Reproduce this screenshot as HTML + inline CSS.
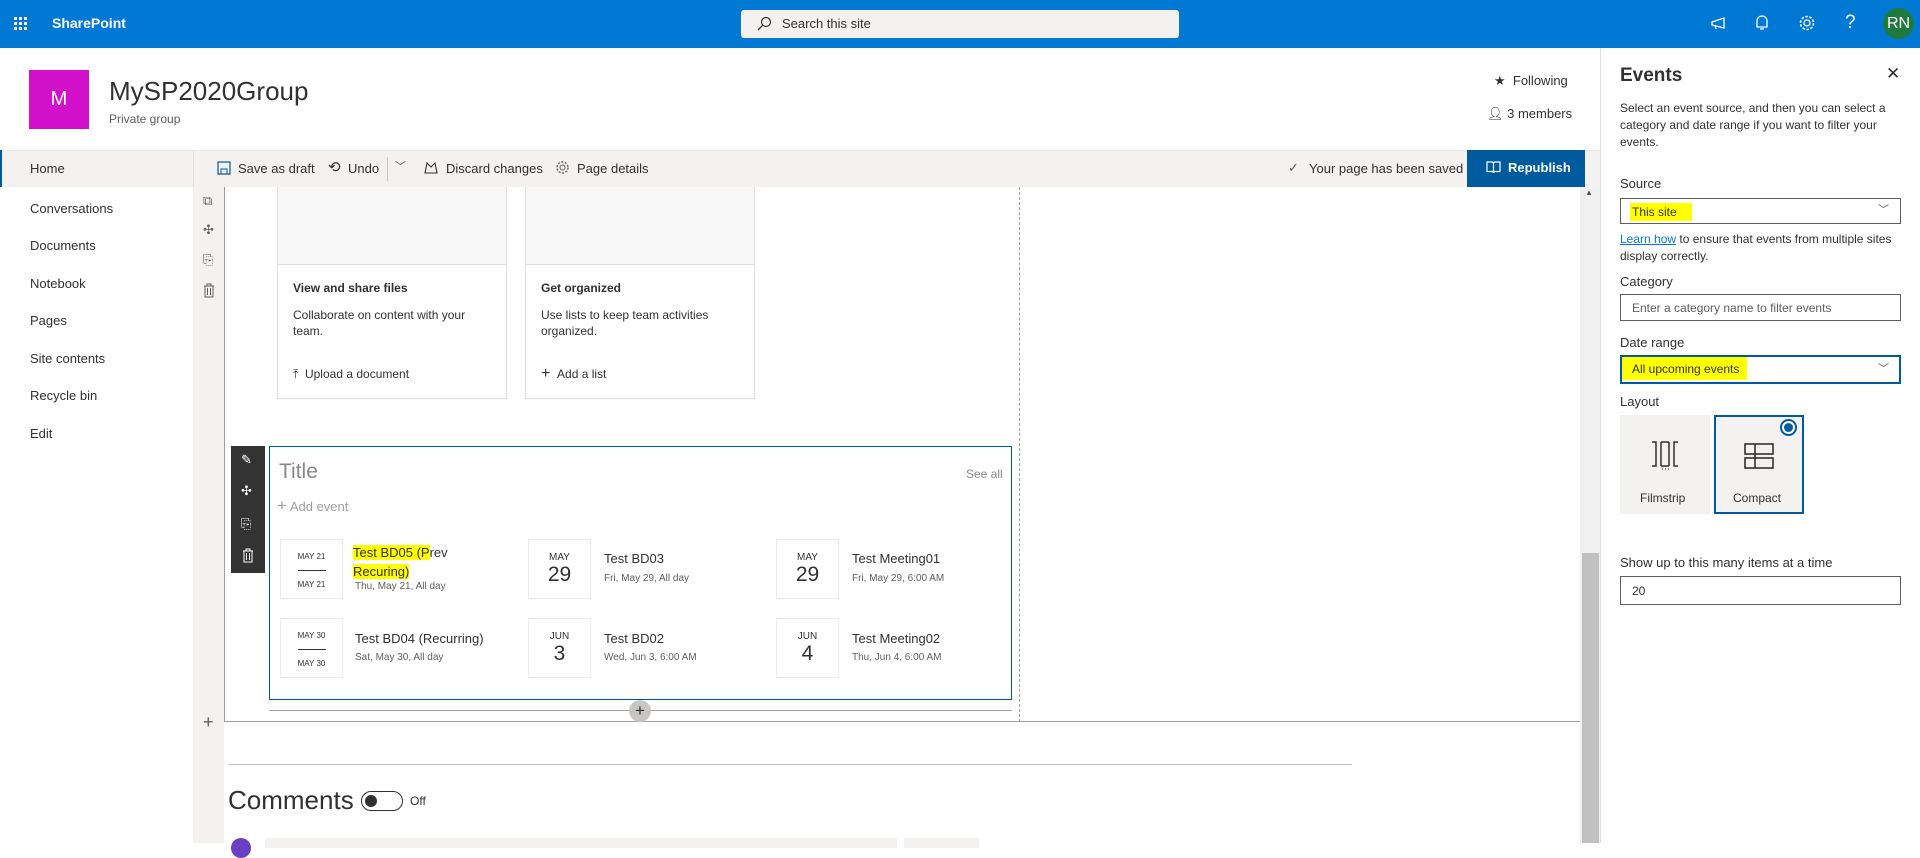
<!DOCTYPE html>
<html><head><meta charset="utf-8"><style>
*{box-sizing:border-box;margin:0;padding:0}
body{width:1920px;height:843px;overflow:hidden;position:relative;background:#fff;font-family:"Liberation Sans",sans-serif;color:#323130;font-size:13px}
.a{position:absolute}
.t{white-space:nowrap}
.nav{left:30px;font-size:13px;color:#323130}
.hl{background:#ffff00}
.card{border:1px solid #e1dfdd;border-top:none;background:#fff}
.db{border:1px solid #eaeaea;background:#fff;text-align:center}
.lbl{font-size:13px;color:#323130}
.inp{border:1px solid #605e5c;background:#fff}
</style></head><body>
<!-- top bar -->
<div class="a" style="left:0;top:0;width:1920px;height:48px;background:#0078d4"></div>
<svg class="a" style="left:14px;top:17px" width="14" height="14"><g fill="#fff"><rect x="0" y="0" width="3" height="3"/><rect x="5" y="0" width="3" height="3"/><rect x="10" y="0" width="3" height="3"/><rect x="0" y="5" width="3" height="3"/><rect x="5" y="5" width="3" height="3"/><rect x="10" y="5" width="3" height="3"/><rect x="0" y="10" width="3" height="3"/><rect x="5" y="10" width="3" height="3"/><rect x="10" y="10" width="3" height="3"/></g></svg>
<div class="a t" style="left:52px;top:15px;color:#fff;font-weight:bold;font-size:14px">SharePoint</div>
<div class="a" style="left:741px;top:10px;width:438px;height:28px;background:#f3f2f1;border-radius:3px"></div>
<svg class="a" style="left:756px;top:16px" width="16" height="16"><circle cx="10" cy="6" r="4.5" fill="none" stroke="#323130" stroke-width="1.2"/><line x1="7" y1="9" x2="2" y2="14" stroke="#323130" stroke-width="1.3"/></svg>
<div class="a t" style="left:782px;top:16px;font-size:13px;color:#323130">Search this site</div>
<svg class="a" style="left:1710px;top:15px" width="18" height="18"><path d="M2 7 L14 3 L14 13 L2 10 Z M5 10 L6 14" fill="none" stroke="#fff" stroke-width="1.3"/></svg>
<svg class="a" style="left:1754px;top:14px" width="16" height="18"><path d="M3 13 V7 a5 5 0 0 1 10 0 V13 Z M6 15 h4" fill="none" stroke="#fff" stroke-width="1.3"/></svg>
<svg class="a" style="left:1798px;top:14px" width="18" height="18"><circle cx="9" cy="9" r="3" fill="none" stroke="#fff" stroke-width="1.3"/><circle cx="9" cy="9" r="6.5" fill="none" stroke="#fff" stroke-width="1.6" stroke-dasharray="2.5 1.6"/></svg>
<div class="a t" style="left:1845px;top:12px;color:#fff;font-size:19px">?</div>
<div class="a" style="left:1883px;top:8px;width:31px;height:31px;border-radius:50%;background:#1f7a3f;color:#fff;font-size:16px;text-align:center;line-height:31px">RN</div>

<!-- header -->
<div class="a" style="left:29px;top:70px;width:60px;height:59px;background:#d20fc9;color:#fff;font-size:20px;text-align:center;line-height:59px">M</div>
<div class="a t" style="left:109px;top:76px;font-size:26px;color:#323130">MySP2020Group</div>
<div class="a t" style="left:109px;top:112px;font-size:12px;color:#605e5c">Private group</div>
<div class="a t" style="left:1494px;top:73px;font-size:13px">★&nbsp;&nbsp;Following</div>
<div class="a t" style="left:1487px;top:106px;font-size:13px">👤︎ 3 members</div>

<!-- command bar -->
<div class="a" style="left:0;top:150px;width:1600px;height:37px;background:#f3f2f1;border-top:1px solid #e8e8e8"></div>
<div class="a" style="left:0;top:150px;width:2px;height:37px;background:#005a9e"></div>
<div class="a t" style="left:30px;top:161px;font-size:13px;color:#323130">Home</div>
<div class="a" style="left:193px;top:150px;width:1px;height:37px;background:#e1dfdd"></div>
<svg class="a" style="left:217px;top:161px" width="14" height="14"><rect x="1" y="1" width="12" height="12" fill="none" stroke="#005a9e" stroke-width="1.2"/><rect x="4" y="8" width="6" height="5" fill="none" stroke="#005a9e"/></svg>
<div class="a t" style="left:238px;top:161px">Save as draft</div>
<div class="a t" style="left:328px;top:158px;font-size:15px">⟲</div>
<div class="a t" style="left:348px;top:161px">Undo</div>
<div class="a" style="left:387px;top:157px;width:1px;height:24px;background:#c8c6c4"></div>
<div class="a t" style="left:395px;top:158px;font-size:11px;color:#605e5c">﹀</div>
<svg class="a" style="left:423px;top:160px" width="16" height="15"><path d="M2 13 L4 3 L8 7 L12 3 L14 13 Z" fill="none" stroke="#323130" stroke-width="1.1"/></svg>
<div class="a t" style="left:446px;top:161px">Discard changes</div>
<svg class="a" style="left:555px;top:160px" width="15" height="15"><circle cx="7.5" cy="7.5" r="2.5" fill="none" stroke="#605e5c"/><circle cx="7.5" cy="7.5" r="5.5" fill="none" stroke="#605e5c" stroke-width="1.4" stroke-dasharray="2 1.5"/></svg>
<div class="a t" style="left:577px;top:161px">Page details</div>
<div class="a t" style="left:1288px;top:160px;color:#605e5c">✓</div>
<div class="a t" style="left:1309px;top:161px;color:#323130">Your page has been saved</div>
<div class="a" style="left:1467px;top:150px;width:118px;height:37px;background:#005a9e"></div>
<svg class="a" style="left:1486px;top:161px" width="15" height="13"><path d="M1 1 H6 Q7.5 1 7.5 3 V12 Q7.5 10.5 6 10.5 H1 Z M14 1 H9 Q7.5 1 7.5 3 V12 Q7.5 10.5 9 10.5 H14 Z" fill="none" stroke="#fff" stroke-width="1.2"/></svg>
<div class="a t" style="left:1508px;top:160px;color:#fff;font-weight:bold;font-size:13px">Republish</div>

<!-- left nav -->
<div class="a nav t" style="top:201px">Conversations</div>
<div class="a nav t" style="top:238px">Documents</div>
<div class="a nav t" style="top:276px">Notebook</div>
<div class="a nav t" style="top:313px">Pages</div>
<div class="a nav t" style="top:351px">Site contents</div>
<div class="a nav t" style="top:388px">Recycle bin</div>
<div class="a nav t" style="top:426px">Edit</div>

<!-- section toolbar strip -->
<div class="a" style="left:193px;top:187px;width:31px;height:656px;background:#f3f2f1"></div>
<div class="a" style="left:224px;top:187px;width:1px;height:535px;background:#a19f9d"></div>
<div class="a" style="left:1019px;top:187px;width:0;height:535px;border-left:1px dashed #a19f9d"></div>
<div class="a" style="left:224px;top:721px;width:1356px;height:1px;background:#a19f9d"></div>
<div class="a t" style="left:203px;top:193px;font-size:13px;color:#605e5c">⧉</div>
<div class="a t" style="left:203px;top:222px;font-size:13px;color:#605e5c">✣</div>
<div class="a t" style="left:203px;top:252px;font-size:13px;color:#605e5c">⎘</div>
<svg class="a" style="left:203px;top:283px" width="12" height="15"><path d="M1 3 H11 M4 3 V1 H8 V3 M2 3 V14 H10 V3 M4.5 5 V12 M7.5 5 V12" fill="none" stroke="#605e5c"/></svg>
<div class="a t" style="left:203px;top:712px;font-size:18px;color:#605e5c">+</div>

<!-- cards -->
<div class="a card" style="left:277px;top:187px;width:230px;height:212px"></div>
<div class="a" style="left:278px;top:187px;width:228px;height:78px;background:#f8f8f8;border-bottom:1px solid #e1dfdd"></div>
<div class="a t" style="left:293px;top:281px;font-weight:bold;font-size:12px">View and share files</div>
<div class="a" style="left:293px;top:307px;width:200px;font-size:12px;line-height:16px">Collaborate on content with your team.</div>
<div class="a t" style="left:293px;top:367px;font-size:12px">⤒&nbsp;&nbsp;Upload a document</div>
<div class="a card" style="left:525px;top:187px;width:230px;height:212px"></div>
<div class="a" style="left:526px;top:187px;width:228px;height:78px;background:#f8f8f8;border-bottom:1px solid #e1dfdd"></div>
<div class="a t" style="left:541px;top:281px;font-weight:bold;font-size:12px">Get organized</div>
<div class="a" style="left:541px;top:307px;width:200px;font-size:12px;line-height:16px">Use lists to keep team activities organized.</div>
<div class="a t" style="left:541px;top:365px;font-size:12px"><span style="font-size:16px">+</span>&nbsp;&nbsp;Add a list</div>

<!-- events webpart -->
<div class="a" style="left:231px;top:446px;width:34px;height:127px;background:#333"></div>
<div class="a t" style="left:241px;top:452px;color:#fff;font-size:13px">✎</div>
<div class="a t" style="left:241px;top:483px;color:#fff;font-size:13px">✣</div>
<div class="a t" style="left:241px;top:516px;color:#fff;font-size:13px">⎘</div>
<svg class="a" style="left:242px;top:548px" width="12" height="15"><path d="M1 3 H11 M4 3 V1 H8 V3 M2 3 V14 H10 V3 M4.5 5 V12 M7.5 5 V12" fill="none" stroke="#fff"/></svg>
<div class="a" style="left:269px;top:446px;width:743px;height:254px;border:1px solid #005a9e"></div>
<div class="a t" style="left:279px;top:460px;font-size:21px;color:#8a8886">Title</div>
<div class="a t" style="left:966px;top:467px;font-size:12px;color:#8a8886">See all</div>
<div class="a t" style="left:277px;top:496px;font-size:13px;color:#a19f9d"><span style="font-size:17px">+</span> Add event</div>

<div class="a db" style="left:280px;top:539px;width:63px;height:60px;font-size:8px;color:#323130"><div style="margin-top:12px">MAY 21</div><div style="width:28px;height:1px;background:#323130;margin:9px auto"></div><div>MAY 21</div></div>
<div class="a t" style="left:353px;top:543px;font-size:13px;line-height:19px"><span class="hl">Test BD05 (P</span>rev<br><span class="hl">Recuring)</span></div>
<div class="a t" style="left:355px;top:581px;font-size:10px;color:#605e5c">Thu, May 21, All day</div>

<div class="a db" style="left:528px;top:539px;width:63px;height:60px"><div style="margin-top:12px;font-size:10px">MAY</div><div style="font-size:21px">29</div></div>
<div class="a t" style="left:604px;top:551px;font-size:13px">Test BD03</div>
<div class="a t" style="left:604px;top:573px;font-size:10px;color:#605e5c">Fri, May 29, All day</div>

<div class="a db" style="left:776px;top:539px;width:63px;height:60px"><div style="margin-top:12px;font-size:10px">MAY</div><div style="font-size:21px">29</div></div>
<div class="a t" style="left:852px;top:551px;font-size:13px">Test Meeting01</div>
<div class="a t" style="left:852px;top:573px;font-size:10px;color:#605e5c">Fri, May 29, 6:00 AM</div>

<div class="a db" style="left:280px;top:618px;width:63px;height:60px;font-size:8px;color:#323130"><div style="margin-top:12px">MAY 30</div><div style="width:28px;height:1px;background:#323130;margin:9px auto"></div><div>MAY 30</div></div>
<div class="a t" style="left:355px;top:631px;font-size:13px">Test BD04 (Recurring)</div>
<div class="a t" style="left:355px;top:652px;font-size:10px;color:#605e5c">Sat, May 30, All day</div>

<div class="a db" style="left:528px;top:618px;width:63px;height:60px"><div style="margin-top:12px;font-size:10px">JUN</div><div style="font-size:21px">3</div></div>
<div class="a t" style="left:604px;top:631px;font-size:13px">Test BD02</div>
<div class="a t" style="left:604px;top:652px;font-size:10px;color:#605e5c">Wed, Jun 3, 6:00 AM</div>

<div class="a db" style="left:776px;top:618px;width:63px;height:60px"><div style="margin-top:12px;font-size:10px">JUN</div><div style="font-size:21px">4</div></div>
<div class="a t" style="left:852px;top:631px;font-size:13px">Test Meeting02</div>
<div class="a t" style="left:852px;top:652px;font-size:10px;color:#605e5c">Thu, Jun 4, 6:00 AM</div>

<div class="a" style="left:269px;top:710px;width:743px;height:1px;background:#a19f9d"></div>
<div class="a" style="left:629px;top:700px;width:22px;height:22px;border-radius:50%;background:#c8c6c4;text-align:center;line-height:21px;font-size:17px;color:#323130">+</div>

<!-- comments -->
<div class="a" style="left:228px;top:764px;width:1124px;height:1px;background:#c8c6c4"></div>
<div class="a t" style="left:228px;top:785px;font-size:26px;color:#323130">Comments</div>
<div class="a" style="left:361px;top:791px;width:42px;height:20px;border:1px solid #323130;border-radius:10px"></div>
<div class="a" style="left:365px;top:795px;width:12px;height:12px;border-radius:50%;background:#323130"></div>
<div class="a t" style="left:410px;top:794px;font-size:12px">Off</div>
<div class="a" style="left:231px;top:838px;width:20px;height:20px;border-radius:50%;background:#6b3fc2"></div>
<div class="a" style="left:265px;top:838px;width:632px;height:10px;background:#f3f2f1"></div>
<div class="a" style="left:904px;top:838px;width:75px;height:10px;background:#f3f2f1"></div>

<!-- scrollbar -->
<div class="a" style="left:1580px;top:187px;width:20px;height:656px;background:#f0f0f0"></div>
<div class="a t" style="left:1585px;top:188px;font-size:8px;color:#505050">▲</div>
<div class="a" style="left:1582px;top:553px;width:17px;height:290px;background:#c1c1c1"></div>

<!-- right panel -->
<div class="a" style="left:1600px;top:48px;width:320px;height:795px;background:#fff;border-left:1px solid #e1dfdd"></div>
<div class="a t" style="left:1620px;top:65px;font-size:19px;font-weight:bold;color:#323130">Events</div>
<div class="a t" style="left:1886px;top:64px;font-size:17px;color:#323130">✕</div>
<div class="a" style="left:1620px;top:100px;width:285px;font-size:12px;line-height:17px">Select an event source, and then you can select a category and date range if you want to filter your events.</div>
<div class="a t lbl" style="left:1620px;top:176px">Source</div>
<div class="a inp" style="left:1620px;top:198px;width:281px;height:26px"></div>
<div class="a t hl" style="left:1630px;top:203px;font-size:12px;padding:2px 15px 2px 2px">This site</div>
<div class="a t" style="left:1878px;top:201px;font-size:11px;color:#605e5c">﹀</div>
<div class="a" style="left:1620px;top:231px;width:290px;font-size:12px;line-height:17px"><span style="color:#0078d4;text-decoration:underline">Learn how</span> to ensure that events from multiple sites display correctly.</div>
<div class="a t lbl" style="left:1620px;top:274px">Category</div>
<div class="a inp" style="left:1620px;top:294px;width:281px;height:27px"></div>
<div class="a t" style="left:1632px;top:301px;font-size:12px;color:#605e5c">Enter a category name to filter events</div>
<div class="a t lbl" style="left:1620px;top:335px">Date range</div>
<div class="a" style="left:1620px;top:355px;width:281px;height:29px;border:2px solid #005a9e"></div>
<div class="a t hl" style="left:1622px;top:357px;font-size:12px;padding:5px 8px 4px 10px">All upcoming events</div>
<div class="a t" style="left:1878px;top:360px;font-size:11px;color:#605e5c">﹀</div>
<div class="a t lbl" style="left:1620px;top:394px">Layout</div>
<div class="a" style="left:1620px;top:415px;width:90px;height:99px;background:#f3f2f1"></div>
<svg class="a" style="left:1650px;top:440px" width="30" height="30"><path d="M2 2 H6 V26 H2 M11 2 V26 M19 2 V26 M11 2 H19 M11 26 H19 M28 2 H24 V26 H28" fill="none" stroke="#323130" stroke-width="1.5"/><path d="M12 29 h1 M15 29 h1 M18 29 h1" stroke="#323130"/></svg>
<div class="a t" style="left:1640px;top:491px;font-size:12px">Filmstrip</div>
<div class="a" style="left:1714px;top:415px;width:90px;height:99px;background:#f3f2f1;border:2px solid #005a9e"></div>
<svg class="a" style="left:1744px;top:443px" width="30" height="27"><rect x="1" y="1" width="28" height="10" fill="none" stroke="#323130" stroke-width="1.6"/><rect x="1" y="15" width="28" height="10" fill="none" stroke="#323130" stroke-width="1.6"/><line x1="11" y1="1" x2="11" y2="25" stroke="#323130" stroke-width="1.6"/></svg>
<div class="a" style="left:1780px;top:419px;width:17px;height:17px;border-radius:50%;border:2px solid #005a9e;background:#fff"></div>
<div class="a" style="left:1784px;top:423px;width:9px;height:9px;border-radius:50%;background:#005a9e"></div>
<div class="a t" style="left:1733px;top:491px;font-size:12px">Compact</div>
<div class="a t lbl" style="left:1620px;top:555px">Show up to this many items at a time</div>
<div class="a inp" style="left:1620px;top:576px;width:281px;height:29px"></div>
<div class="a t" style="left:1632px;top:584px;font-size:12px">20</div>
</body></html>
